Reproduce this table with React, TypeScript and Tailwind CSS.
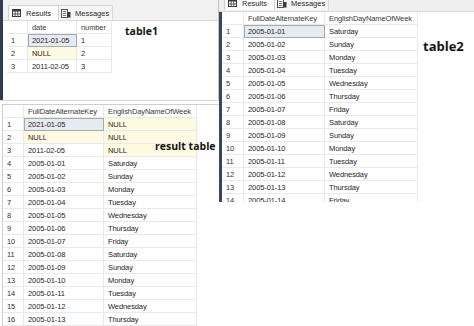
import type { ReactNode } from "react";

type Row = { n: number; cells: string[]; yellow?: boolean[] };

const cellBase =
  "h-[13px] shrink-0 overflow-hidden whitespace-nowrap border-b border-r border-[#e9e9e9] pl-[4px] leading-[13px]";

function GridIcon() {
  return (
    <svg width="9" height="8" viewBox="0 0 9 8" aria-hidden="true">
      <rect x="0.5" y="0.5" width="8" height="7" fill="#fff" stroke="#3b3b3b" />
      <rect x="0.5" y="0.5" width="8" height="2" fill="#3b3b3b" />
      <path d="M3.2 0.5v7M5.8 0.5v7M0.5 5h8" stroke="#3b3b3b" strokeWidth="0.8" />
    </svg>
  );
}

function MessagesIcon() {
  return (
    <svg width="10" height="9" viewBox="0 0 10 9" aria-hidden="true">
      <rect x="0.5" y="0.5" width="6" height="8" fill="#fff" stroke="#555" />
      <path d="M1.8 2.5h3.4M1.8 4.5h3.4M1.8 6.5h3.4" stroke="#555" strokeWidth="0.8" />
      <rect x="6" y="3" width="3.5" height="5.5" fill="#3b3b3b" />
    </svg>
  );
}

function Tabs({ className = "" }: { className?: string }) {
  return (
    <div
      className={`flex h-[15px] shrink-0 items-stretch text-[7.5px] leading-[15px] text-[#2b2b2b] ${className}`}
    >
      <div className="flex items-center gap-[5px] border border-b-0 border-[#d2d2d2] bg-[#fbfbfb] pl-[3px] pr-[7px]">
        <GridIcon />
        <span>Results</span>
      </div>
      <div className="flex items-center gap-[4px] border border-b-0 border-l-0 border-[#d8d8d8] bg-[#f6f6f6] pl-[2px] pr-[3px]">
        <MessagesIcon />
        <span>Messages</span>
      </div>
    </div>
  );
}

function Grid({
  cols,
  header,
  rows,
}: {
  cols: string[];
  header: string[];
  rows: Row[];
}) {
  return (
    <div className="flex flex-col font-['Liberation_Sans',Arial,sans-serif] text-[7.5px] tracking-[-0.1px] text-[#262626]">
      <div className="flex text-[#3a3a3a]">
        <div className={`${cellBase} ${cols[0]}`} />
        {header.map((h, i) => (
          <div key={h} className={`${cellBase} ${cols[i + 1]}`}>
            {h}
          </div>
        ))}
      </div>
      {rows.map((row) => (
        <div key={row.n} className="flex">
          <div className={`${cellBase} ${cols[0]} text-[#333]`}>{row.n}</div>
          {row.cells.map((c, i) => {
            const selected = row.n === 1 && i === 0;
            const yellow = row.yellow?.[i];
            return (
              <div
                key={i}
                className={`${cellBase} ${cols[i + 1]} ${
                  selected
                    ? "bg-[#e6ebf1] outline outline-1 -outline-offset-1 outline-[#a3a9b0]"
                    : yellow
                      ? "bg-[#fffbe2]"
                      : ""
                }`}
              >
                {c}
              </div>
            );
          })}
        </div>
      ))}
    </div>
  );
}

function Label({ className, children }: { className: string; children: ReactNode }) {
  return (
    <div
      className={`absolute whitespace-nowrap font-['Open_Sans',sans-serif] font-bold text-[#151515] ${className}`}
    >
      {children}
    </div>
  );
}

const days = [
  "Saturday",
  "Sunday",
  "Monday",
  "Tuesday",
  "Wednesday",
  "Thursday",
  "Friday",
];

const dateRows = (from: number, count: number, startN: number): Row[] =>
  Array.from({ length: count }, (_, i) => {
    const d = from + i;
    return {
      n: startN + i,
      cells: [`2005-01-${String(d).padStart(2, "0")}`, days[(d - 1) % 7]],
    };
  });

const table1Rows: Row[] = [
  { n: 1, cells: ["2021-01-05", "1"] },
  { n: 2, cells: ["NULL", "2"], yellow: [true, false] },
  { n: 3, cells: ["2011-02-05", "3"] },
];

const resultRows: Row[] = [
  { n: 1, cells: ["2021-01-05", "NULL"], yellow: [false, true] },
  { n: 2, cells: ["NULL", "NULL"], yellow: [true, true] },
  { n: 3, cells: ["2011-02-05", "NULL"], yellow: [false, true] },
  ...dateRows(1, 13, 4),
];

const table2Rows = dateRows(1, 14, 1);

export default function App() {
  return (
    <div className="flex h-[326px] w-[474px] overflow-hidden bg-white">
      <div className="flex w-[219px] shrink-0 flex-col">
        <div className="relative flex h-[101px] shrink-0 border-b border-[#d6d6d6]">
          <div className="w-[3px] bg-[#2f3b58]" />
          <div className="flex flex-1 flex-col border-r border-[#c4c4c4]">
            <div className="flex h-[20px] shrink-0 items-end bg-[#f1f1f1] pl-[5px] font-['Liberation_Sans',Arial,sans-serif]">
              <Tabs />
            </div>
            <div className="flex-1 border-t border-[#dadada] bg-white pl-[4px]">
              <Grid
                cols={["w-[21px]", "w-[49px]", "w-[35px]"]}
                header={["date", "number"]}
                rows={table1Rows}
              />
            </div>
          </div>
          <Label className="left-[125px] top-[24px] text-[10.5px] leading-[14px]">
            table1
          </Label>
        </div>
        <div className="relative flex-1 pl-[2px] pt-[3px]">
          <div className="h-full border-l border-t border-[#cfcfcf]">
            <Grid
              cols={["w-[21px]", "w-[80px]", "w-[93px]"]}
              header={["FullDateAlternateKey", "EnglishDayNameOfWeek"]}
              rows={resultRows}
            />
          </div>
          <Label className="left-[155px] top-[38px] text-[10.5px] leading-[14px]">
            result table
          </Label>
        </div>
      </div>

      <div className="relative flex h-[202px] flex-1 flex-col overflow-hidden">
        <div className="flex h-[11px] shrink-0 items-start overflow-hidden bg-[#efefef] pl-[5px] font-['Liberation_Sans',Arial,sans-serif]">
          <Tabs className="-mt-[5px]" />
        </div>
        <div className="flex flex-1 border-t border-[#d8d8d8]">
          <div className="w-[3px] shrink-0 bg-[#3a4562]" />
          <Grid
            cols={["w-[22px]", "w-[81px]", "w-[93px]"]}
            header={["FullDateAlternateKey", "EnglishDayNameOfWeek"]}
            rows={table2Rows}
          />
        </div>
        <Label className="left-[204px] top-[38px] text-[13px] leading-[16px]">
          table2
        </Label>
      </div>
    </div>
  );
}
